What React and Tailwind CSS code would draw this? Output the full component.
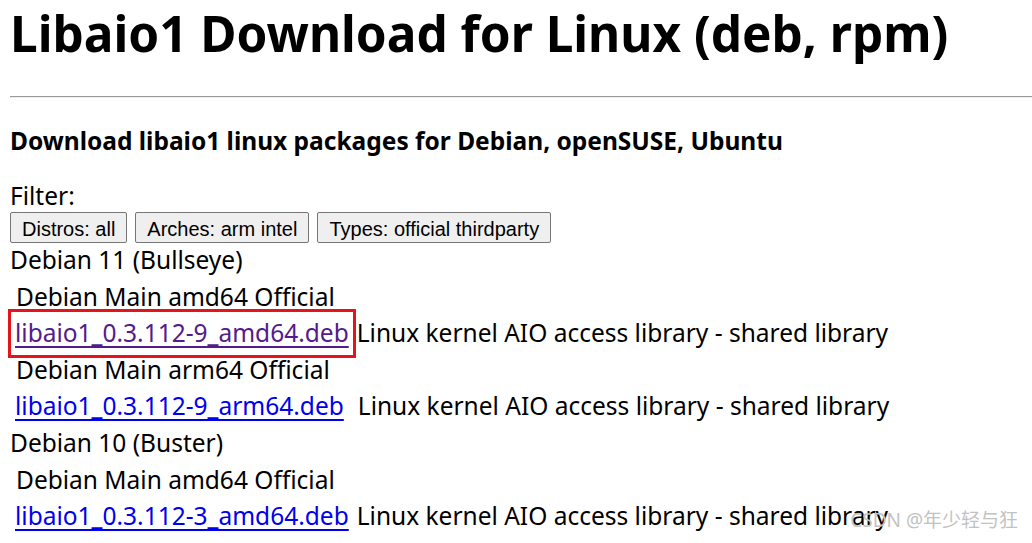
const rows = [
  { type: "distro", text: "Debian 11 (Bullseye)" },
  { type: "repo", text: "Debian Main amd64 Official" },
  { type: "pkg", file: "libaio1_0.3.112-9_amd64.deb", visited: true, boxed: true },
  { type: "repo", text: "Debian Main arm64 Official" },
  { type: "pkg", file: "libaio1_0.3.112-9_arm64.deb", gap: true },
  { type: "distro", text: "Debian 10 (Buster)" },
  { type: "repo", text: "Debian Main amd64 Official" },
  { type: "pkg", file: "libaio1_0.3.112-3_amd64.deb" },
  { type: "repo", text: "Debian Main arm64 Official" },
];

function Row({ row }) {
  if (row.type === "distro") return <div className="pl-[10px]">{row.text}</div>;
  if (row.type === "repo") return <div className="pl-[16px]">{row.text}</div>;
  return (
    <div className="pl-[15px] flex whitespace-nowrap">
      <span className={row.boxed ? "outline-[3px] outline-solid outline-[#e5141b] outline-offset-[3px] -mx-[1px] px-[1px]" : ""}>
        <a href="#" className={"underline underline-offset-[4px] " + (row.visited ? "text-[#551a8b]" : "text-[#0000ee]")}>
          {row.file}
        </a>
      </span>
      <span className={row.gap ? "pl-[14px]" : "pl-[8px]"}>Linux kernel AIO access library - shared library</span>
    </div>
  );
}

export default function App() {
  return (
    <div className="relative h-[543px] overflow-hidden bg-white text-black font-['Noto_Sans',sans-serif]">
      <h1 className="pl-[10px] text-[49.5px] font-bold leading-[66px] whitespace-nowrap">
        Libaio1 Download for Linux (deb, rpm)
      </h1>
      <div className="ml-[10px] mt-[30px] h-[2px] bg-[#9a9a9a] border-b border-[#eeeeee]"></div>
      <h3 className="pl-[10px] mt-[28px] text-[24.5px] font-bold leading-[30px] whitespace-nowrap">
        Download libaio1 linux packages for Debian, openSUSE, Ubuntu
      </h3>
      <div className="mt-[24px] text-[24.5px] leading-[32px]">
        <div className="pl-[10px]">Filter:</div>
        <div className="pl-[10px] flex gap-[8px] font-['Liberation_Sans',Arial,sans-serif] text-[20px]">
          <button className="h-[31px] px-[11px] bg-[#efefef] border border-[#767676] rounded-[2px]">Distros: all</button>
          <button className="h-[31px] px-[11px] bg-[#efefef] border border-[#767676] rounded-[2px]">Arches: arm intel</button>
          <button className="h-[31px] px-[11px] bg-[#efefef] border border-[#767676] rounded-[2px]">Types: official thirdparty</button>
        </div>
        <div className="leading-[36.6px] -mt-[1px]">
          {rows.map((r, i) => (
            <Row key={i} row={r} />
          ))}
        </div>
      </div>
      <div className="absolute right-[14px] bottom-[9px] text-[19px] text-[#c2c2c2] font-['Noto_Sans','Noto_Sans_CJK_SC',sans-serif]">
        CSDN @年少轻与狂
      </div>
    </div>
  );
}
